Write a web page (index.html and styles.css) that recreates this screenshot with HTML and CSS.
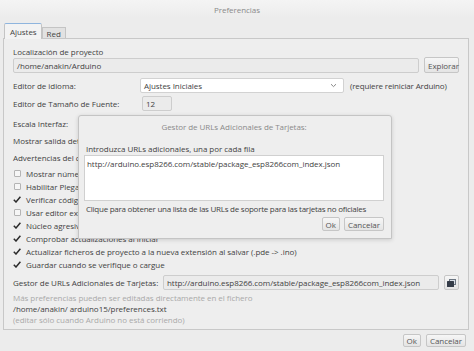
FILE: index.html
```html
<!DOCTYPE html>
<html lang="es">
<head>
    <meta charset="UTF-8">
    <title>Preferencias</title>
    <link rel="stylesheet" href="styles.css">
</head>
<body>
    <div class="window">
        <!-- Title bar -->
        <div class="titlebar">Preferencias</div>

        <!-- Tabs -->
        <div class="tabs">
            <div class="tab active">Ajustes</div>
            <div class="tab">Red</div>
        </div>

        <!-- Settings panel -->
        <div class="panel">
            <div class="row label-row">Localización de proyecto</div>
            <div class="row path-row">
                <div class="field path-field">/home/anakin/Arduino</div>
                <button class="btn explore">Explorar</button>
            </div>
            <div class="row lang-row">
                <span class="row-label">Editor de idioma:</span>
                <div class="select">
                    <span>Ajustes Iniciales</span>
                    <svg width="7" height="5" viewBox="0 0 7 5"><path d="M1 1.2 L3.5 3.6 L6 1.2" fill="none" stroke="#888" stroke-width="1"/></svg>
                </div>
                <span class="note">(requiere reiniciar Arduino)</span>
            </div>
            <div class="row size-row">
                <span class="row-label">Editor de Tamaño de Fuente:</span>
                <div class="field size-field">12</div>
            </div>
            <div class="row text-row scale-row">Escala Interfaz:</div>
            <div class="row text-row">Mostrar salida detallada mientras: compilación</div>
            <div class="row text-row">Advertencias del compilador:</div>

            <div class="checks">
                <div class="check"><span class="box"></span>Mostrar números de línea</div>
                <div class="check"><span class="box"></span>Habilitar Plegado Código</div>
                <div class="check"><span class="tick"><svg width="8" height="7" viewBox="0 0 8 7"><path d="M0.8 3.8 L3 6 L7.4 0.8" fill="none" stroke="#2b2b2b" stroke-width="1.5"/></svg></span>Verificar código después de cargar</div>
                <div class="check"><span class="box"></span>Usar editor externo</div>
                <div class="check"><span class="tick"><svg width="8" height="7" viewBox="0 0 8 7"><path d="M0.8 3.8 L3 6 L7.4 0.8" fill="none" stroke="#2b2b2b" stroke-width="1.5"/></svg></span>Núcleo agresivo de caché de compilación</div>
                <div class="check"><span class="tick"><svg width="8" height="7" viewBox="0 0 8 7"><path d="M0.8 3.8 L3 6 L7.4 0.8" fill="none" stroke="#2b2b2b" stroke-width="1.5"/></svg></span>Comprobar actualizaciones al iniciar</div>
                <div class="check"><span class="tick"><svg width="8" height="7" viewBox="0 0 8 7"><path d="M0.8 3.8 L3 6 L7.4 0.8" fill="none" stroke="#2b2b2b" stroke-width="1.5"/></svg></span>Actualizar ficheros de proyecto a la nueva extensión al salvar (.pde -&gt; .ino)</div>
                <div class="check"><span class="tick"><svg width="8" height="7" viewBox="0 0 8 7"><path d="M0.8 3.8 L3 6 L7.4 0.8" fill="none" stroke="#2b2b2b" stroke-width="1.5"/></svg></span>Guardar cuando se verifique o cargue</div>
            </div>

            <div class="row urls-row">
                <span class="urls-label">Gestor de URLs Adicionales de Tarjetas:</span>
                <div class="field urls-field">http://arduino.esp8266.com/stable/package_esp8266com_index.json</div>
                <button class="btn icon-btn">
                    <svg width="9" height="8" viewBox="0 0 9 8"><rect x="2.5" y="0.5" width="6" height="5" fill="#d8dee6" stroke="#6a7480" stroke-width="1"/><rect x="0" y="2" width="7" height="6" rx="0.5" fill="#343c48"/></svg>
                </button>
            </div>
            <div class="row muted">Más preferencias pueden ser editadas directamente en el fichero</div>
            <div class="row file-path">/home/anakin/ arduino15/preferences.txt</div>
            <div class="row muted">(editar sólo cuando Arduino no está corriendo)</div>
        </div>

        <!-- Dialog buttons -->
        <div class="footer">
            <button class="btn">Ok</button>
            <button class="btn">Cancelar</button>
        </div>

        <!-- Additional URLs dialog -->
        <div class="popup">
            <div class="popup-title">Gestor de URLs Adicionales de Tarjetas:</div>
            <div class="popup-text">Introduzca URLs adicionales, una por cada fila</div>
            <div class="textarea">http://arduino.esp8266.com/stable/package_esp8266com_index.json</div>
            <div class="popup-text hint">Clique para obtener una lista de las URLs de soporte para las tarjetas no oficiales</div>
            <div class="popup-buttons">
                <button class="btn">Ok</button>
                <button class="btn">Cancelar</button>
            </div>
        </div>
    </div>
</body>
</html>
```

FILE: styles.css
```css
* {
    box-sizing: border-box;
    margin: 0;
    padding: 0;
}

body {
    font-family: 'Open Sans', 'DejaVu Sans', sans-serif;
    font-size: 8px;
    letter-spacing: -0.05px;
    color: #424242;
    background: #ebebeb;
}

.window {
    position: relative;
    width: 474px;
    height: 351px;
    background: #ececec;
    overflow: hidden;
}

/* Title bar */
.titlebar {
    height: 18px;
    line-height: 20px;
    text-align: center;
    color: #8a8a8a;
    background: linear-gradient(#f4f4f4, #ececec);
}

/* Tabs */
.tabs {
    display: flex;
    align-items: flex-end;
    height: 20px;
    padding: 4px 0 0 4px;
}

.tab {
    height: 11px;
    line-height: 11px;
    padding: 0 4px;
    border: 1px solid #c4c4c4;
    border-bottom: none;
    background: #e2e2e2;
    color: #444;
}

.tab.active {
    height: 16px;
    line-height: 16px;
    padding: 0 4px 0 5px;
    background: #f3f3f3;
    border-top: 1px solid #8fb5de;
    border-radius: 2px 2px 0 0;
    margin-bottom: -1px;
    position: relative;
}

/* Panel */
.panel {
    margin: 0 5px 0 3px;
    height: 292px;
    border: 1px solid #c8c8c8;
    background: #eeeeee;
    padding: 6px 9px 0 9px;
    display: flex;
    flex-direction: column;
}

.row {
    display: flex;
    align-items: center;
    white-space: nowrap;
}

.label-row {
    height: 12px;
}

.path-row {
    height: 16px;
}

.field {
    height: 15px;
    line-height: 13px;
    padding: 0 3px;
    border: 1px solid #cdcdcd;
    border-radius: 2px;
    background: #ebebeb;
    white-space: nowrap;
    overflow: hidden;
}

.path-field {
    width: 407px;
}

.btn {
    font-family: inherit;
    font-size: 8px;
    letter-spacing: -0.05px;
    color: #555;
    height: 15px;
    padding: 0 3px;
    border: 1px solid #c6c6c6;
    border-radius: 2px;
    background: linear-gradient(#f6f6f6, #e4e4e4);
}

.explore {
    height: 16px;
    margin-left: 5px;
    width: 35px;
}

.lang-row {
    height: 16px;
    margin-top: 4px;
}

.row-label {
    width: 127px;
}

.select {
    width: 204px;
    height: 15px;
    display: flex;
    align-items: center;
    justify-content: space-between;
    padding: 0 6px 0 3px;
    background: #ffffff;
    border: 1px solid #d2d2d2;
    border-radius: 2px;
}

.note {
    margin-left: 6px;
    letter-spacing: -0.15px;
}

.size-row {
    height: 16px;
    margin-top: 2px;
}

.size-field {
    width: 30px;
    margin-left: 2px;
}

.text-row {
    height: 17px;
}

.scale-row {
    margin-top: 4px;
}

/* Checkboxes */
.checks {
    margin-top: 1px;
    display: flex;
    flex-direction: column;
}

.check {
    display: flex;
    align-items: center;
    height: 13px;
    white-space: nowrap;
}

.box {
    width: 7px;
    height: 7px;
    border: 1px solid #b4b4b4;
    border-radius: 1px;
    background: #f6f6f6;
    margin: 0 5px 0 1px;
}

.tick {
    width: 8px;
    display: flex;
    margin: 0 5px 0 0;
}

.urls-row {
    height: 15px;
    margin-top: 4px;
}

.urls-label {
    width: 150px;
}

.urls-field {
    width: 276px;
}

.icon-btn {
    width: 15px;
    height: 15px;
    margin-left: 5px;
    display: flex;
    align-items: center;
    justify-content: center;
    padding: 0;
}

.muted {
    color: #a9a9a9;
    height: 11px;
    margin-top: 2px;
}

.file-path {
    height: 11px;
    color: #424242;
}

.file-path + .muted {
    margin-top: 0;
}

/* Footer */
.footer {
    display: flex;
    justify-content: flex-end;
    gap: 5px;
    padding: 4px 8px 0 0;
}

.footer .btn {
    height: 13px;
}

/* Popup dialog */
.popup {
    position: absolute;
    left: 78px;
    top: 115px;
    width: 314px;
    height: 124px;
    background: #eeeeee;
    border: 1px solid #c4c4c4;
    border-radius: 3px 3px 0 0;
    box-shadow: 0 1px 4px rgba(0, 0, 0, 0.15);
    padding: 0 7px 0 5px;
    display: flex;
    flex-direction: column;
}

.popup-title {
    height: 22px;
    line-height: 22px;
    text-align: center;
    color: #8a8a8a;
}

.popup-text {
    height: 17px;
    line-height: 11px;
    padding: 5px 0 0 2px;
    white-space: nowrap;
}

.textarea {
    height: 46px;
    line-height: 11px;
    background: #ffffff;
    border: 1px solid #d0d0d0;
    padding: 2px 2px;
    white-space: nowrap;
}

.hint {
    height: 15px;
    padding: 2px 0 0 2px;
    letter-spacing: -0.25px;
}

.popup-buttons {
    display: flex;
    justify-content: flex-end;
    gap: 4px;
    margin-top: 1px;
}

.popup-buttons .btn {
    height: 14px;
}
```
